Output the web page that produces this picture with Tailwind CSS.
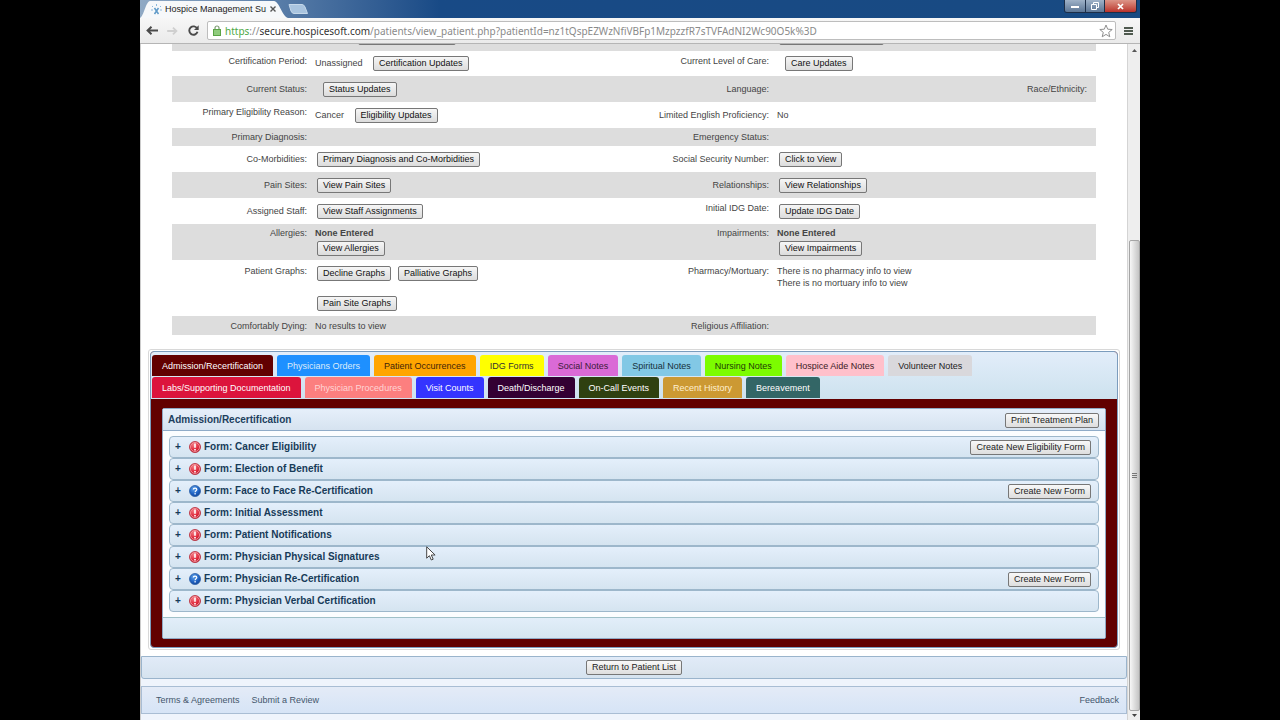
<!DOCTYPE html>
<html lang="en">
<head>
<meta charset="utf-8">
<meta name="viewport" content="width=device-width, initial-scale=1">
<title>Hospice Management Suite</title>
<script src="https://cdn.jsdelivr.net/npm/@tailwindcss/browser@4"></script>
</head>
<body class="bg-black px-[140px]">
<svg class="absolute size-0" aria-hidden="true">
  <defs>
    <radialGradient id="red" cx=".4" cy=".3" r=".8"><stop offset="0" stop-color="#f58088"/><stop offset=".6" stop-color="#dd2438"/><stop offset="1" stop-color="#a81325"/></radialGradient>
    <radialGradient id="blue" cx=".4" cy=".3" r=".8"><stop offset="0" stop-color="#62a5ec"/><stop offset=".6" stop-color="#1c5fc0"/><stop offset="1" stop-color="#123f8c"/></radialGradient>
    <symbol id="alert" viewBox="0 0 12 12"><circle cx="6" cy="6" r="5.5" fill="url(#red)" stroke="#b52b38" stroke-width=".8"/><circle cx="6" cy="6" r="4.5" fill="none" stroke="#f6a3a9" stroke-width=".8"/><path d="M6 2.6v4.1M6 7.9v1.5" stroke="#fff" stroke-width="1.6"/></symbol>
    <symbol id="help" viewBox="0 0 12 12"><circle cx="6" cy="6" r="5.5" fill="url(#blue)" stroke="#2a5ea6" stroke-width=".8"/><path d="M4.3 4.6C4.3 2.6 7.8 2.6 7.8 4.6 7.8 5.7 6.1 5.8 6.1 7.2M6.1 8.1v1.3" fill="none" stroke="#fff" stroke-width="1.2"/></symbol>
  </defs>
</svg>
<div class="flex h-screen flex-col overflow-hidden bg-white font-['Liberation_Sans',Arial,sans-serif] text-[9px] leading-[12px] text-[#444]">

  <!-- Browser title bar -->
  <header class="shrink-0">
    <div class="flex h-[18px] items-start bg-linear-to-r from-[#8fa9c4] via-[#184a86] via-30% to-[#184a82]">
      <div class="relative h-[18px] w-[148px] shrink-0">
        <svg class="absolute inset-0 h-full w-full" viewBox="0 0 148 18" preserveAspectRatio="none" aria-hidden="true"><path d="M0 18C4 16 6 1 10 1H134C139 1 142 16 148 18Z" fill="#f6f8fa"/></svg>
        <div class="relative flex h-full items-center gap-[3px] pl-[11px] text-[#222]">
          <svg class="size-[11px] shrink-0" viewBox="0 0 11 11" fill="none" stroke="#5f9ac8" aria-hidden="true"><path d="M3.5 4l4 6M7.5 4l-4 6" stroke-width="1.5"/><path d="M1 2l1 1M5.5 0v2M10 2L9 3M0 6h2M9 6h2" stroke="#8bb9dc"/></svg>
          <span class="w-[102px] whitespace-nowrap">Hospice Management Su</span>
          <button aria-label="Close tab" class="shrink-0"><svg class="size-[6px]" viewBox="0 0 6 6" stroke="#555" stroke-width="1.4"><path d="M.5.5l5 5M5.5.5l-5 5"/></svg></button>
        </div>
      </div>
      <button aria-label="New tab" class="mt-1"><svg class="h-[10px] w-[20px]" viewBox="0 0 20 10"><path d="M1 .5H14Q16 .5 17 3L19.5 9.5H6Q4 9.5 3 7Z" fill="#a9c4df" stroke="#c5d8ea"/></svg></button>
      <div class="mr-[3px] ml-auto flex h-[13px] overflow-hidden rounded-b-[3px] border border-t-0 border-[#1c2e48]">
        <button aria-label="Minimize" class="flex w-[20px] items-end justify-center bg-linear-to-b from-[#9fb2c8] to-[#5c7695] pb-[4px]"><span class="h-[2px] w-[8px] bg-white"></span></button>
        <button aria-label="Restore" class="flex w-[19px] items-center justify-center border-l border-[#1c2e48] bg-linear-to-b from-[#9fb2c8] to-[#5c7695]"><svg class="size-[8px]" viewBox="0 0 8 8" fill="none" stroke="#fff"><path d="M2.5 2V.5h5v5H6M.5 2.5h5v5h-5z"/></svg></button>
        <button aria-label="Close" class="flex w-[32px] items-center justify-center border-l border-[#1c2e48] bg-linear-to-b from-[#dc9488] to-[#b9302b]"><svg class="size-[7px]" viewBox="0 0 7 7" stroke="#fff" stroke-width="1.7"><path d="M1 1l5 5M6 1L1 6"/></svg></button>
      </div>
    </div>
    <!-- Toolbar -->
    <div class="flex h-[26px] items-center border-b border-[#b5b5b5] bg-linear-to-b from-[#f7f7f7] to-[#eaeaea] pr-[7px] pl-[6px]">
      <button aria-label="Back" class="w-[21px]"><svg class="h-[9px] w-[12px]" viewBox="0 0 12 9" fill="none" stroke="#4a4a4a" stroke-width="2"><path d="M12 4.5H2M5.5.8L1.6 4.5 5.5 8.2"/></svg></button>
      <button aria-label="Forward" class="w-[21px]"><svg class="h-[8px] w-[11px]" viewBox="0 0 12 9" fill="none" stroke="#cfcfcf" stroke-width="2"><path d="M0 4.5H10M6.5.8L10.4 4.5 6.5 8.2"/></svg></button>
      <button aria-label="Reload" class="w-[19px]"><svg class="size-[11px]" viewBox="0 0 11 11"><path d="M9.2 3.6A4.2 4.2 0 1 0 9.5 6.8" fill="none" stroke="#4a4a4a" stroke-width="1.9"/><path d="M10.7.3V5H6Z" fill="#4a4a4a"/></svg></button>
      <div class="flex h-[19px] min-w-0 flex-1 items-center rounded-[2px] border border-[#bdbdbd] bg-white pr-[2px] pl-[5px]">
        <svg class="mr-[4px] h-[11px] w-[8px] shrink-0" viewBox="0 0 8 11" aria-hidden="true"><path d="M2 5V3a2 2 0 0 1 4 0V5" fill="none" stroke="#7a9a70" stroke-width="1.2"/><rect x=".5" y="4.5" width="7" height="6" fill="#8fcb7c" stroke="#5aa345"/></svg>
        <div class="flex-1 overflow-hidden font-['Noto_Sans',sans-serif] text-[10px] leading-[16px] whitespace-nowrap text-[#8a8a8a]"><span class="text-[#4ea845]">https</span>://<span class="text-[#333]">secure.hospicesoft.com</span>/patients/view_patient.php?patientId=nz1tQspEZWzNfiVBFp1MzpzzfR7sTVFAdNI2Wc90O5k%3D</div>
        <button aria-label="Bookmark"><svg class="size-[14px]" viewBox="0 0 14 14" fill="#fff" stroke="#8f8f8f"><path d="M7 1l1.700 4.200 4.500.3-3.500 2.900 1.100 4.400L7 10.400l-3.800 2.400 1.100-4.400L.8 5.500l4.500-.3z"/></svg></button>
      </div>
      <button aria-label="Menu" class="ml-[8px] flex flex-col gap-px"><span class="h-[2px] w-[9px] bg-[#4f5a4f]"></span><span class="h-[2px] w-[9px] bg-[#4f5a4f]"></span><span class="h-[2px] w-[9px] bg-[#4f5a4f]"></span></button>
    </div>
  </header>

  <div class="flex min-h-0 flex-1">
    <main class="min-w-0 flex-1 overflow-hidden border-l border-[#ccc]">
      <!-- Patient details -->
      <section class="mr-[31px] ml-[31px] [&_button]:h-[15px] [&_button]:rounded-[2px] [&_button]:border [&_button]:border-[#777] [&_button]:bg-linear-to-b [&_button]:from-[#f6f6f6] [&_button]:to-[#dcdcdc] [&_button]:px-[5px] [&_button]:leading-[13px] [&_button]:whitespace-nowrap [&_button]:text-[#111] [&>div]:grid [&>div]:grid-cols-[136px_1fr_142px_326px] [&>div]:items-center [&>div>div]:px-[7px] [&>div>label]:pr-px [&>div>label]:text-right">
        <div class="-mt-[19px] h-[26px] bg-[#ddd]"><span></span><div class="pl-[50px]!"><button aria-label="Updates" class="w-[98px]"></button></div><span></span><div><button aria-label="Updates" class="ml-[2px] w-[105px]"></button></div></div>
        <div class="h-[25px]"><label for="b1" class="-mt-[6px]">Certification Period:</label><div>Unassigned <button id="b1" class="ml-[8px]">Certification Updates</button></div><label for="b2" class="-mt-[6px]">Current Level of Care:</label><div><button id="b2" class="ml-[8px]">Care Updates</button></div></div>
        <div class="h-[26px] bg-[#ddd]"><label for="b3">Current Status:</label><div><button id="b3" class="ml-[8px]">Status Updates</button></div><span class="pr-px text-right">Language:</span><div class="pr-[9px]! text-right">Race/Ethnicity:</div></div>
        <div class="h-[26px]"><label for="b4" class="-mt-[6px]">Primary Eligibility Reason:</label><div>Cancer <button id="b4" class="ml-[8px]">Eligibility Updates</button></div><span class="pr-px text-right">Limited English Proficiency:</span><div>No</div></div>
        <div class="h-[18px] bg-[#ddd]"><span class="pr-px text-right">Primary Diagnosis:</span><span></span><span class="pr-px text-right">Emergency Status:</span></div>
        <div class="h-[26px]"><label for="b5">Co-Morbidities:</label><div><button id="b5" class="ml-[2px]">Primary Diagnosis and Co-Morbidities</button></div><label for="b6">Social Security Number:</label><div><button id="b6" class="ml-[2px]">Click to View</button></div></div>
        <div class="h-[26px] bg-[#ddd]"><label for="b7">Pain Sites:</label><div><button id="b7" class="ml-[2px]">View Pain Sites</button></div><label for="b8">Relationships:</label><div><button id="b8" class="ml-[2px]">View Relationships</button></div></div>
        <div class="h-[26px]"><label for="b9">Assigned Staff:</label><div><button id="b9" class="ml-[2px]">View Staff Assignments</button></div><label for="b10" class="-mt-[6px]">Initial IDG Date:</label><div><button id="b10" class="ml-[2px]">Update IDG Date</button></div></div>
        <div class="h-[36px] items-start! bg-[#ddd] pt-[3px]"><label for="b11">Allergies:</label><div><b class="block">None Entered</b><button id="b11" class="mt-[2px] ml-[2px] block">View Allergies</button></div><label for="b12">Impairments:</label><div><b class="block">None Entered</b><button id="b12" class="mt-[2px] ml-[2px] block">View Impairments</button></div></div>
        <div class="h-[56px] items-start! pt-[5px]"><label for="b13">Patient Graphs:</label><div class="flex flex-col items-start gap-[15px] pt-px"><div class="flex gap-[7px] pl-[2px]"><button id="b13">Decline Graphs</button><button>Palliative Graphs</button></div><button class="ml-[2px]">Pain Site Graphs</button></div><span class="pr-px text-right">Pharmacy/Mortuary:</span><div>There is no pharmacy info to view<br>There is no mortuary info to view</div></div>
        <div class="h-[19px] bg-[#ddd]"><span class="pr-px text-right">Comfortably Dying:</span><div>No results to view</div><span class="pr-px text-right">Religious Affiliation:</span></div>
      </section>

      <!-- Chart tabs -->
      <section class="mt-[14px] mr-[7px] ml-[7px] rounded-[3px] border border-[#d8d8d8] p-px">
        <div class="rounded-[4px] border border-[#7b9cbd] bg-[#620000]">
          <nav class="flex flex-col gap-px rounded-t-[3px] bg-linear-to-b from-[#e2edfa] to-[#cde2ee] pt-[3px] pb-px pl-px [&_a]:h-[21px] [&_a]:rounded-t-[3px] [&_a]:px-[10px] [&_a]:leading-[22px] [&_a]:whitespace-nowrap [&>div]:flex [&>div]:gap-[4px]">
            <div>
              <a href="#" class="bg-[#620000] text-white">Admission/Recertification</a>
              <a href="#" class="bg-[#1e90ff] text-[#dcebfa]">Physicians Orders</a>
              <a href="#" class="bg-[#ffa500] text-[#40240a]">Patient Occurrences</a>
              <a href="#" class="bg-[#ffff00] text-[#333]">IDG Forms</a>
              <a href="#" class="bg-[#da6ad6] text-[#3a1a3a]">Social Notes</a>
              <a href="#" class="bg-[#82c8e5] text-[#15303c]">Spiritual Notes</a>
              <a href="#" class="bg-[#7cfc00] text-[#1d3d05]">Nursing Notes</a>
              <a href="#" class="bg-[#ffc0cb] text-[#402026]">Hospice Aide Notes</a>
              <a href="#" class="bg-[#d9d8dc] text-[#222]">Volunteer Notes</a>
            </div>
            <div>
              <a href="#" class="bg-[#dc143c] text-white">Labs/Supporting Documentation</a>
              <a href="#" class="bg-[#fc7f7f] text-[#ffd5d5]">Physician Procedures</a>
              <a href="#" class="bg-[#3434ff] text-white">Visit Counts</a>
              <a href="#" class="bg-[#330033] text-white">Death/Discharge</a>
              <a href="#" class="bg-[#2f4010] text-white">On-Call Events</a>
              <a href="#" class="bg-[#cc9933] text-[#fff0d0]">Recent History</a>
              <a href="#" class="bg-[#336666] text-white">Bereavement</a>
            </div>
          </nav>
          <div class="px-[11px] pt-[9px] pb-[8px]">
            <div class="rounded-[2px] border border-[#8fa9c4] bg-[#fbfdff]">
              <div class="flex h-[22px] items-center justify-between border-b border-[#8fabc8] bg-linear-to-b from-[#e6effa] to-[#d6e3f0] pr-[6px] pl-[5px]">
                <h2 class="text-[10px] font-bold text-[#1d3f5e]">Admission/Recertification</h2>
                <button class="mt-[2px] h-[15px] rounded-[2px] border border-[#777] bg-linear-to-b from-[#f8f8f8] to-[#dedede] px-[5px] leading-[13px] text-[#222]">Print Treatment Plan</button>
              </div>
              <ul class="px-[6px] pt-[5px] pb-[5px] text-[10px] leading-[14px] font-bold text-[#173b59] [&_button]:ml-auto [&_button]:h-[15px] [&_button]:rounded-[2px] [&_button]:border [&_button]:border-[#777] [&_button]:bg-linear-to-b [&_button]:from-[#f8f8f8] [&_button]:to-[#dedede] [&_button]:px-[5px] [&_button]:text-[9px] [&_button]:leading-[13px] [&_button]:font-normal [&_button]:text-[#222] [&_i]:w-[14px] [&_i]:not-italic [&_svg]:mr-[3px] [&_svg]:size-[12px] [&>li]:flex [&>li]:h-[22px] [&>li]:items-center [&>li]:rounded-[4px] [&>li]:border [&>li]:border-[#9db7cb] [&>li]:bg-linear-to-b [&>li]:from-[#e4effb] [&>li]:to-[#d5e4f0] [&>li]:pr-[7px] [&>li]:pl-[5px]">
                <li><i>+</i><svg><use href="#alert"/></svg>Form: Cancer Eligibility<button>Create New Eligibility Form</button></li>
                <li><i>+</i><svg><use href="#alert"/></svg>Form: Election of Benefit</li>
                <li><i>+</i><svg><use href="#help"/></svg>Form: Face to Face Re-Certification<button>Create New Form</button></li>
                <li><i>+</i><svg><use href="#alert"/></svg>Form: Initial Assessment</li>
                <li><i>+</i><svg><use href="#alert"/></svg>Form: Patient Notifications</li>
                <li><i>+</i><svg><use href="#alert"/></svg>Form: Physician Physical Signatures</li>
                <li><i>+</i><svg><use href="#help"/></svg>Form: Physician Re-Certification<button>Create New Form</button></li>
                <li><i>+</i><svg><use href="#alert"/></svg>Form: Physician Verbal Certification</li>
              </ul>
              <div class="h-[21px] border-t border-[#9fc0c8] bg-linear-to-b from-[#e2eefa] to-[#d5e5f0]"></div>
            </div>
          </div>
        </div>
      </section>

      <footer class="mt-[6px] bg-[#eff4fc] pb-[20px]">
        <div class="flex h-[23px] items-center justify-center rounded-b-[3px] border border-[#9ab4cc] bg-linear-to-b from-[#e1ebf8] to-[#d6e3ef]">
          <button class="h-[15px] rounded-[2px] border border-[#777] bg-linear-to-b from-[#f8f8f8] to-[#dedede] px-[5px] leading-[13px] text-[#222]">Return to Patient List</button>
        </div>
        <div class="mt-[7px] flex h-[28px] items-center gap-[12px] border border-[#a9bdd4] bg-linear-to-b from-[#e4ebf7] to-[#d6e4f6] pr-[7px] pl-[14px] text-[#44566c]">
          <a href="#">Terms &amp; Agreements</a><a href="#">Submit a Review</a><a href="#" class="ml-auto">Feedback</a>
        </div>
      </footer>
    </main>

    <!-- Page scrollbar -->
    <div class="flex w-[13px] flex-col items-center border-l border-[#d4d4d4] bg-[#eeeeee]" aria-hidden="true">
      <svg class="mt-[5px] mb-[188px] h-[3px] w-[5px] shrink-0" viewBox="0 0 5 3"><path d="M0 3L2.5 0 5 3z" fill="#555"/></svg>
      <div class="flex w-[11px] flex-1 flex-col items-center justify-center gap-px rounded-[2px] border border-[#a5a5a5] bg-linear-to-r from-[#f7f7f7] to-[#c4c4c4]">
        <span class="h-px w-[5px] bg-[#777]"></span><span class="h-px w-[5px] bg-[#777]"></span><span class="h-px w-[5px] bg-[#777]"></span>
      </div>
      <svg class="my-[3px] h-[3px] w-[5px] shrink-0" viewBox="0 0 5 3"><path d="M0 0L2.5 3 5 0z" fill="#444"/></svg>
    </div>
  </div>
</div>
<!-- Mouse pointer -->
<svg class="absolute top-[546px] left-[426px] h-[15px] w-[10px]" viewBox="0 0 10 15" aria-hidden="true"><path d="M.7.8v11.4l2.700-2.500 1.900 4.300 1.900-.8-1.900-4.200h3.800z" fill="#fff" stroke="#444"/></svg>
</body>
</html>
